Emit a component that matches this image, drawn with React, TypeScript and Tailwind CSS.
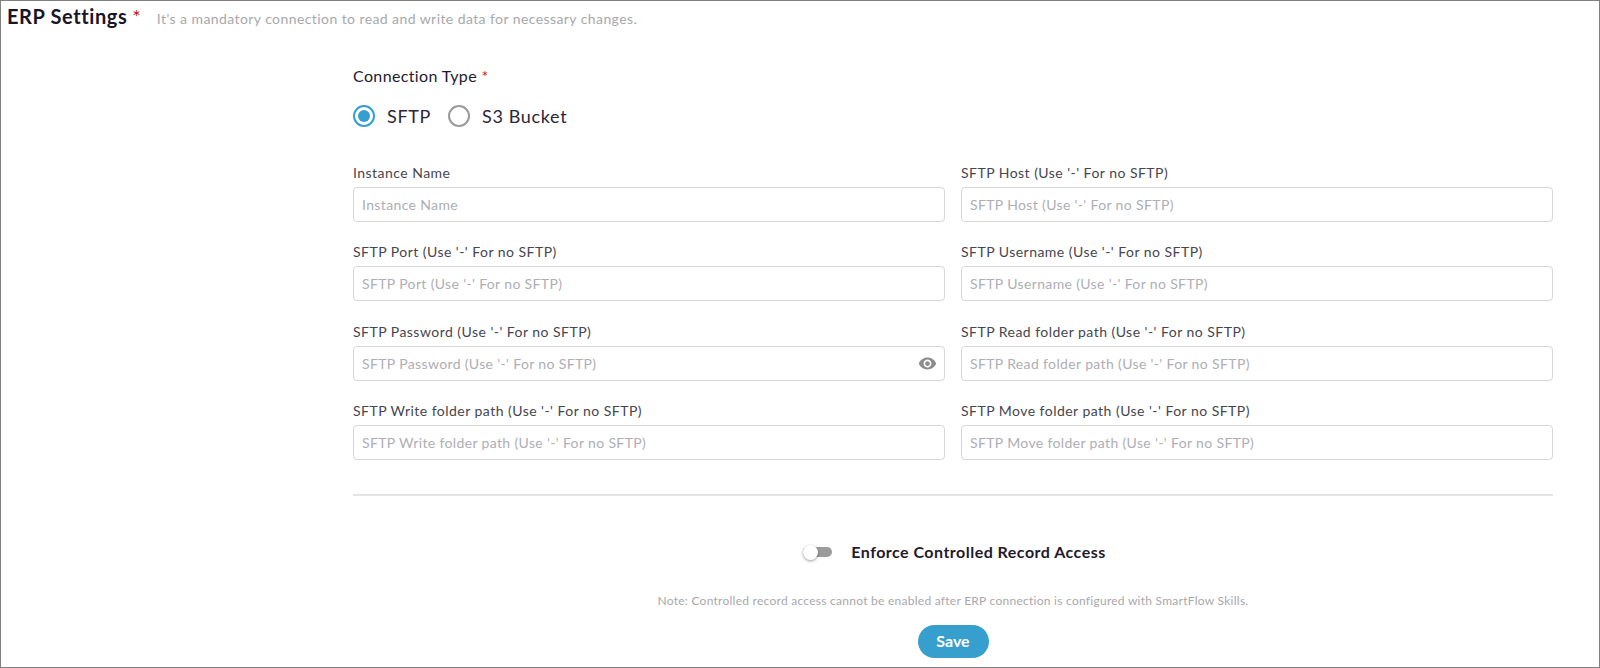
const Field = ({ label, eye }: { label: string; eye?: boolean }) => (
  <div className="flex flex-col">
    <label className="h-[20px] text-[14px] leading-[20px] text-[#46464f] mb-[4px] tracking-[0.47px]">{label}</label>
    <div className="relative">
      <input
        readOnly
        placeholder={label}
        className="block w-full h-[35px] rounded-[4px] border border-[#d6d6d6] bg-white px-[8px] text-[14px] tracking-[0.36px] outline-none placeholder:text-[#aeaeb4]"
      />
      {eye && (
        <svg viewBox="0 0 24 24" className="absolute right-[8px] top-[8px] w-[19px] h-[19px]" fill="#8c8c8c">
          <path d="M12 4.5C7 4.5 2.73 7.61 1 12c1.73 4.39 6 7.5 11 7.5s9.27-3.11 11-7.5c-1.73-4.39-6-7.5-11-7.5zM12 17c-2.76 0-5-2.24-5-5s2.24-5 5-5 5 2.24 5 5-2.24 5-5 5zm0-8c-1.66 0-3 1.34-3 3s1.34 3 3 3 3-1.34 3-3-1.34-3-3-3z" />
        </svg>
      )}
    </div>
  </div>
);

export default function App() {
  return (
    <div className="box-border h-[668px] w-full overflow-hidden border border-[#808080] bg-white font-['Lato','Liberation_Sans',sans-serif] text-[#1f1a2e]">
      <div className="flex items-baseline pl-[6px] h-[30px]">
        <span className="text-[20px] leading-[30px] font-bold tracking-[0.6px] text-[#1a1428]">ERP Settings</span>
        <span className="ml-[5px] text-[20px] leading-[30px] text-[#c01818]">*</span>
        <span className="ml-[16px] text-[14px] tracking-[0.42px] text-[#a8a8ac]">It's a mandatory connection to read and write data for necessary changes.</span>
      </div>
      <div className="pl-[352px] pr-[46px]">
        <div className="mt-[35px] h-[20px] text-[16px] leading-[20px] text-[#1f1a2e] tracking-[0.37px]">
          Connection Type <span className="text-[#c01818]">*</span>
        </div>
        <div className="mt-[19px] flex items-center h-[22px] text-[18px] text-[#2b2638] tracking-[0.65px]">
          <span className="flex items-center justify-center w-[22px] h-[22px] rounded-full border-[2px] border-[#359fd0]">
            <span className="block w-[12px] h-[12px] rounded-full bg-[#359fd0]" />
          </span>
          <span className="ml-[12px]">SFTP</span>
          <span className="ml-[17px] block w-[22px] h-[22px] rounded-full border-[2px] border-[#9a9a9a]" />
          <span className="ml-[12px]">S3 Bucket</span>
        </div>
        <div className="mt-[36px] grid grid-cols-2 gap-x-[16px] gap-y-[20.3px]">
          <Field label="Instance Name" />
          <Field label="SFTP Host (Use '-' For no SFTP)" />
          <Field label="SFTP Port (Use '-' For no SFTP)" />
          <Field label="SFTP Username (Use '-' For no SFTP)" />
          <Field label="SFTP Password (Use '-' For no SFTP)" eye />
          <Field label="SFTP Read folder path (Use '-' For no SFTP)" />
          <Field label="SFTP Write folder path (Use '-' For no SFTP)" />
          <Field label="SFTP Move folder path (Use '-' For no SFTP)" />
        </div>
        <div className="mt-[34px] h-[2px] bg-[#e4e4e4]" />
        <div className="mt-[46px] flex items-center justify-center h-[20px] pl-[3px]">
          <span className="relative block w-[29px] h-[10px] rounded-full bg-[#9c9c9c]">
            <span className="absolute left-0 top-[-2px] block w-[15px] h-[15px] rounded-full bg-white shadow-[0_1px_3px_rgba(0,0,0,0.4)]" />
          </span>
          <span className="ml-[19px] text-[16px] font-bold text-[#1f1a2e] tracking-[0.48px]">Enforce Controlled Record Access</span>
        </div>
        <div className="mt-[31px] h-[16px] text-center text-[12px] leading-[16px] tracking-[0.26px] text-[#a8a8ac]">
          Note: Controlled record access cannot be enabled after ERP connection is configured with SmartFlow Skills.
        </div>
        <div className="mt-[16px] flex justify-center">
          <button className="w-[71px] h-[33px] rounded-full bg-[#379fcd] text-white text-[16px] font-bold">Save</button>
        </div>
      </div>
    </div>
  );
}
